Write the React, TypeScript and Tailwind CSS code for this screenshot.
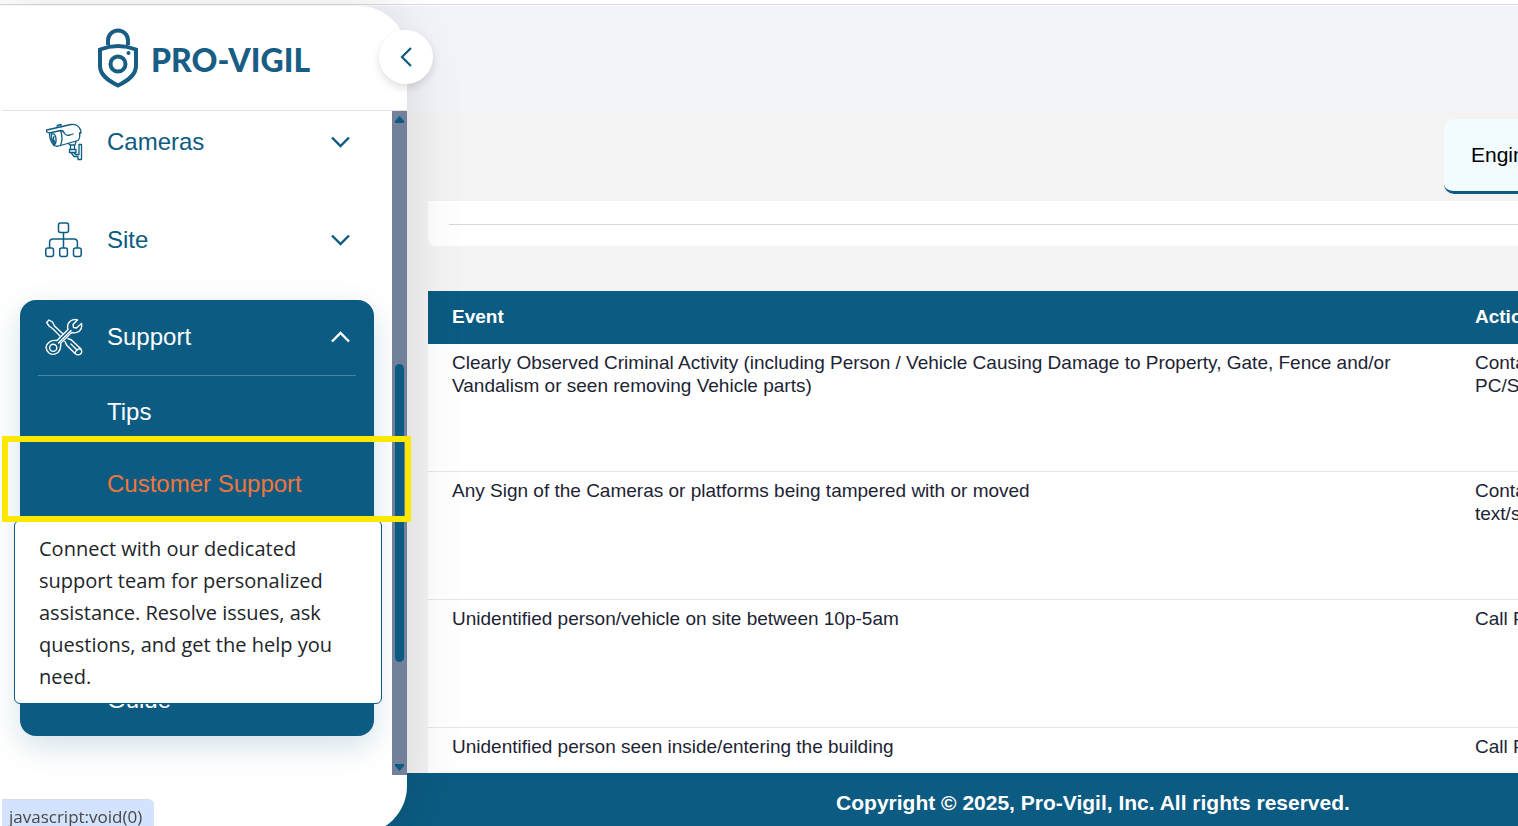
import React from 'react'

interface EventRow {
  event: string[]
  action: string[]
}

const rows: EventRow[] = [
  {
    event: [
      'Clearly Observed Criminal Activity (including Person / Vehicle Causing Damage to Property, Gate, Fence and/or',
      'Vandalism or seen removing Vehicle parts)',
    ],
    action: ['Contact', 'PC/SC'],
  },
  {
    event: ['Any Sign of the Cameras or platforms being tampered with or moved'],
    action: ['Contact', 'text/sms'],
  },
  { event: ['Unidentified person/vehicle on site between 10p-5am'], action: ['Call PD'] },
  { event: ['Unidentified person seen inside/entering the building'], action: ['Call PD'] },
]

const Logo = () => (
  <div className="flex items-center gap-3 text-[#175d84]">
    <svg width="42" height="60" viewBox="0 0 42 60" fill="none" stroke="currentColor" strokeWidth="4">
      <path d="M11 17V12.500a10 10 0 0 1 20 0V17" />
      <path d="M3 21.500Q21 14.500 39 21.500V38C39 47 31 52.500 21 57.500C11 52.500 3 47 3 38Z" />
      <circle cx="21" cy="36" r="7.500" />
      <circle cx="31.500" cy="25" r="2" fill="currentColor" stroke="none" />
    </svg>
    <span className="pt-1 font-[Lato,sans-serif] text-[32px] leading-none font-black">PRO-VIGIL</span>
  </div>
)

const CameraIcon = () => (
  <svg
    width="38"
    height="38"
    viewBox="0 0 38 38"
    fill="none"
    stroke="currentColor"
    strokeWidth="1.300"
    strokeLinejoin="round"
    strokeLinecap="round"
  >
    {/* Hood and body */}
    <path d="M1.700 7L26 1.500Q32 1 34.500 5Q36 7 36 10H34.500Q35.500 15 33 17.500L15.500 22.500Q12 24 9 22.500Q4.500 18 4.500 10L1.700 9Z" />
    <path d="M4.500 10L15.500 7.500Q18.500 7.500 19.500 10.500Q21 13 25 12L28 11" />
    <path d="M12.300 4.500V2.500L16 1.500V3.700" />
    {/* Lens */}
    <path d="M15.500 7.500Q18.500 15 15.500 22.500" />
    <path d="M6.500 11Q10.500 10 11 15.500Q11.500 20 9 22.500M6.500 11Q6 17 9 21M9 13.500Q7.500 17 9.500 19" />
    {/* Bracket */}
    <path d="M23.500 20.500L25 22H30L31 18.500M25.500 22V26.500M29.500 22V26.500M24.500 26.500H31V29.500H24.500Z" />
    <path d="M34 21.500H36.500V36.500H33V33.500H29L26 29.500M29 29.500L30.500 31.500H34V21.500" />
  </svg>
)

const SiteIcon = () => (
  <svg width="38" height="38" viewBox="0 0 38 38" fill="none" stroke="currentColor" strokeWidth="1.500">
    <rect x="13.500" y="2" width="10" height="9.500" rx="2" />
    <rect x="0.800" y="27" width="7.700" height="8.500" rx="2" />
    <rect x="14.700" y="27" width="7.700" height="8.500" rx="2" />
    <rect x="28.500" y="27" width="7.700" height="8.500" rx="2" />
    <path d="M18.500 11.500V27M4.600 27V21a3 3 0 0 1 3-3H29.400a3 3 0 0 1 3 3v6" />
  </svg>
)

const ToolsIcon = () => (
  <svg
    width="38"
    height="38"
    viewBox="0 0 38 38"
    fill="none"
    stroke="currentColor"
    strokeWidth="1.400"
    strokeLinejoin="round"
    strokeLinecap="round"
  >
    {/* Screwdriver */}
    <path d="M15 18L7.500 10.500L4 8L1.700 4.500L4 2L7.500 4L9.500 8L17.500 15.500" />
    <path d="M23 20.500L26.500 22L35.500 30.500Q38 34 35.500 36Q33 38 30 35.500L21.500 27L20 23.500" />
    <path d="M26 26L31.500 31.500M30 35Q31 31.500 35.500 30.500" />
    {/* Wrench */}
    <path d="M12 22.500L23 11.500Q21.500 6 25.500 3Q29 0.800 32.500 2L28 6.500L28.500 9.500L31.500 10L36.500 5.500Q37.500 10 34.500 13Q31 15.700 26.500 14.500L15.500 25.500Q16.500 31 13 34.500Q8.500 38 4 35Q-0.500 31 2 26.500Q5.500 21.500 12 22.500Z" />
    <path d="M13.500 25L26 12.500" />
    <circle cx="8.200" cy="29.800" r="3.600" />
  </svg>
)

const Chevron = ({ up = false }: { up?: boolean }) => (
  <svg width="19" height="12" viewBox="0 0 19 12" fill="none" stroke="currentColor" strokeWidth="2.400">
    <path d={up ? 'M1 10.500L9.500 2L18 10.500' : 'M1 1.500L9.500 10L18 1.500'} />
  </svg>
)

const NavButton = ({ icon, label }: { icon: React.ReactNode; label: string }) => (
  <button className="flex h-[62px] items-center pr-6 pl-[25px] text-left text-2xl text-[#0c5b82]">
    {icon}
    <span className="ml-6 flex-1">{label}</span>
    <Chevron />
  </button>
)

const Sidebar = () => (
  <aside className="relative z-10 flex w-[407px] shrink-0 flex-col self-start rounded-r-[48px] bg-white shadow-[0_0_60px_rgba(0,0,0,0.120)]">
    <div className="ml-0.5 flex h-[105px] items-center border-b border-[#e2e2e2] pl-[95px]">
      <Logo />
    </div>
    <button
      aria-label="Collapse menu"
      className="absolute top-6 -right-[26px] flex size-[54px] items-center justify-center rounded-full bg-white text-[#0c5b82] shadow-[0_4px_8px_rgba(0,0,0,0.120)]"
    >
      <svg width="12" height="20" viewBox="0 0 12 20" fill="none" stroke="currentColor" strokeWidth="2.200">
        <path d="M11 1L2 10L11 19" />
      </svg>
    </button>

    <div className="flex h-[664px]">
      <nav className="flex flex-1 flex-col pr-[18px] pl-5">
        <NavButton icon={<CameraIcon />} label="Cameras" />
        <div className="h-9" />
        <NavButton icon={<SiteIcon />} label="Site" />

        {/* Open section */}
        <div className="mt-[29px] flex h-[436px] flex-col rounded-2xl bg-[#0c5b82] text-2xl text-white shadow-[0_10px_30px_rgba(12,91,130,0.180)]">
          <button className="mx-[18px] flex h-[76px] shrink-0 items-center border-b border-white/25 pr-[6px] pb-0.5 pl-[7px] text-left">
            <ToolsIcon />
            <span className="ml-6 flex-1">Support</span>
            <Chevron up />
          </button>
          <a href="#tips" className="flex h-[72px] items-center pl-[87px]">
            Tips
          </a>
          <div className="relative">
            <a
              href="#customer-support"
              aria-describedby="support-tip"
              className="flex h-[72px] items-center pl-[87px] text-[#f2753a]"
            >
              Customer Support
            </a>
            <div
              id="support-tip"
              role="tooltip"
              className="absolute top-[72px] -right-2 -left-1.5 rounded-md border border-[#0c5b82] bg-white px-6 pt-3 pb-[10px] font-['Open_Sans',sans-serif] text-xl leading-8 text-[#212529]"
            >
              Connect with our dedicated
              <br />
              support team for personalized
              <br />
              assistance. Resolve issues, ask
              <br />
              questions, and get the help you
              <br />
              need.
            </div>
            <div className="pointer-events-none absolute -top-3 -right-[37px] -left-[18px] h-[86px] border-[6px] border-[#ffe800]" />
          </div>
          <a href="#guide" className="mt-auto flex h-[72px] items-center pl-[87px]">
            Guide
          </a>
        </div>
      </nav>

      {/* Scroll track */}
      <div className="flex w-[15px] flex-col items-center bg-[#738099] py-1 text-[#0c5b82]">
        <svg width="9" height="8" viewBox="0 0 9 8" fill="currentColor">
          <path d="M4.500 1L9 6V8H0V6Z" />
        </svg>
        <div className="mt-[241px] h-[298px] w-[9px] rounded-full bg-[#0c5b82]" />
        <svg className="mt-auto" width="9" height="8" viewBox="0 0 9 8" fill="currentColor">
          <path d="M4.500 8L9 3V1H0V3Z" />
        </svg>
      </div>
    </div>
    <div className="h-[59px]" />
  </aside>
)

const EventTable = () => (
  <table className="w-full table-fixed border-separate border-spacing-0 bg-white text-left text-[19px] text-[#1c2434]">
    <thead>
      <tr className="h-[53px] bg-[#0c5b82] text-white">
        <th className="w-[1023px] px-6 py-0">Event</th>
        <th className="px-6 py-0">Action</th>
      </tr>
    </thead>
    <tbody>
      {rows.map((row) => (
        <tr key={row.event[0]} className="h-[128px] align-top leading-[23px] whitespace-nowrap">
          {[row.event, row.action].map((lines, idx) => (
            <td key={idx} className="border-b border-[#e4e6e8] px-6 pt-[7px]">
              {lines.map((line) => (
                <div key={line}>{line}</div>
              ))}
            </td>
          ))}
        </tr>
      ))}
    </tbody>
  </table>
)

export default function App() {
  return (
    <div className="h-screen overflow-hidden bg-white font-['Liberation_Sans',Arial,sans-serif]">
      <div className="mt-1 border-t border-[#dedede]" />
      <div className="mt-px flex h-full">
        <Sidebar />

        <div className="-ml-12 flex h-[calc(100vh-6px)] min-w-0 flex-1 flex-col bg-[#f3f3f3]">
          <header className="h-[105px] shrink-0 bg-[#f3f4fa]" />
          <main className="-mr-[261px] min-h-0 flex-1 overflow-hidden pl-[69px]">
            <div className="flex h-[90px] justify-end pt-2">
              <button className="mr-[100px] h-[75px] w-[235px] rounded-[10px] border-b-[3px] border-[#0c5b82] bg-[#f2fcff] pl-[27px] text-left text-[21px] text-black">
                Engineering
              </button>
            </div>
            <div className="h-[45px] rounded-lg rounded-t-none bg-white px-[21px] pt-[23px]">
              <hr className="border-[#d6d6d6]" />
            </div>
            <div className="mt-[45px]">
              <EventTable />
            </div>
          </main>
          <footer className="-mr-[261px] flex h-[53px] shrink-0 items-center justify-center bg-[#0c5b82] pt-1.5 pl-12 text-[21px] font-bold text-white">
            Copyright © 2025, Pro-Vigil, Inc. All rights reserved.
          </footer>
        </div>
      </div>

      {/* Link target hint */}
      <div className="fixed bottom-0 left-0.5 z-20 flex h-[27px] items-center rounded-tr-md border-t border-[#dcdcdc] bg-[#d3e3fd] pt-2 pr-3 pl-[7px] font-['Open_Sans',sans-serif] text-[17px] text-[#474747]">
        javascript:void(0)
      </div>
    </div>
  )
}
